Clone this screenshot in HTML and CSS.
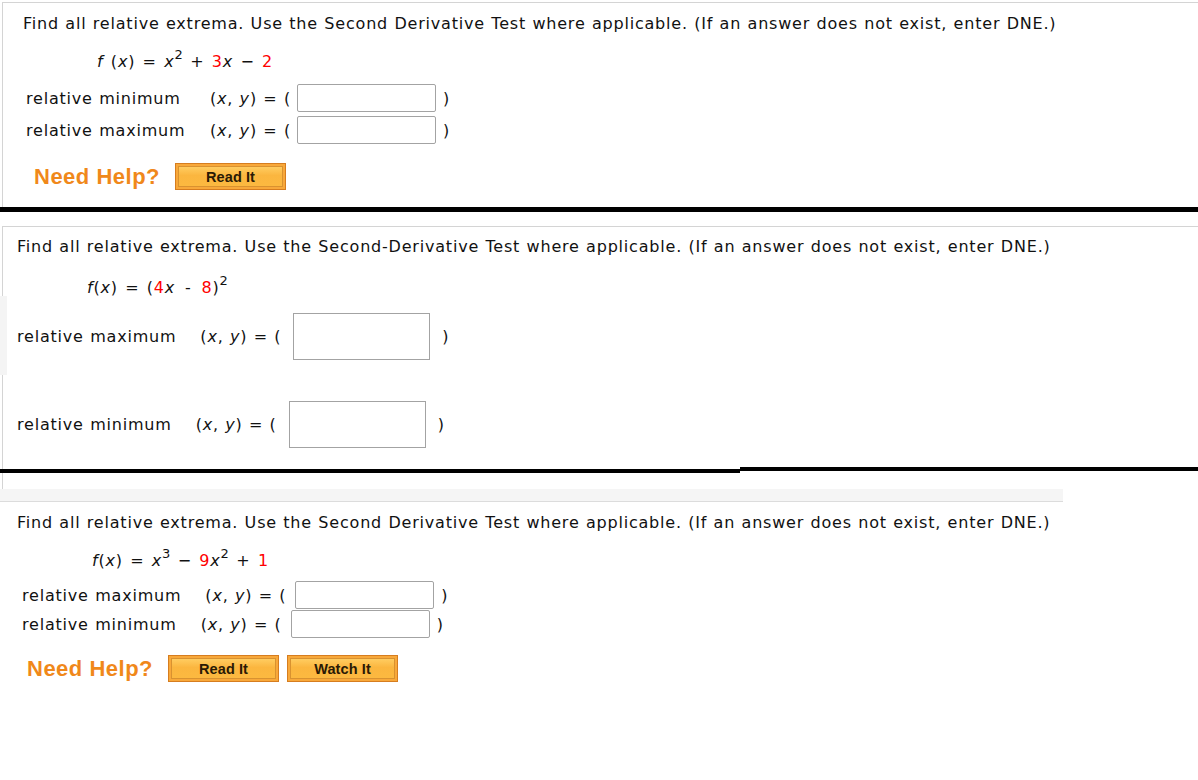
FILE: index.html
```html
<!DOCTYPE html>
<html>
<head>
<meta charset="utf-8">
<link rel="stylesheet" href="styles.css">
</head>
<body>
<div class="q q1">
  <p class="prompt">Find all relative extrema. Use the Second Derivative Test where applicable. (If an answer does not exist, enter DNE.)</p>
  <p class="formula f1"><i>f</i> (<i>x</i>) = <i>x</i><sup>2</sup> + <span class="red">3</span><i>x</i> − <span class="red">2</span></p>
  <div class="grid">
    <span>relative minimum</span><span class="xy">(<i>x</i>, <i>y</i>) = (</span><span class="box small"></span><span>)</span>
    <span>relative maximum</span><span class="xy">(<i>x</i>, <i>y</i>) = (</span><span class="box small"></span><span>)</span>
  </div>
  <div class="help h1">
    <span class="need">Need Help?</span>
    <span class="btn"><span class="btn-in">Read It</span></span>
  </div>
</div>
<div class="rule"></div>
<div class="q q2">
  <span class="tab"></span>
  <p class="prompt">Find all relative extrema. Use the Second-Derivative Test where applicable. (If an answer does not exist, enter DNE.)</p>
  <p class="formula f2"><i>f</i>(<i>x</i>) = (<span class="red">4</span><i>x</i><span class="sp"> - </span><span class="red">8</span>)<sup>2</sup></p>
  <div class="row r2a"><span class="lbl">relative maximum</span><span class="xy">(<i>x</i>, <i>y</i>) = (</span><span class="box big"></span><span class="cp">)</span></div>
  <div class="row r2b"><span class="lbl">relative minimum</span><span class="xy">(<i>x</i>, <i>y</i>) = (</span><span class="box big"></span><span class="cp">)</span></div>
  <div class="rule2"><span class="seg1"></span><span class="seg2"></span></div>
</div>
<div class="band"></div>
<div class="q3">
  <p class="prompt">Find all relative extrema. Use the Second Derivative Test where applicable. (If an answer does not exist, enter DNE.)</p>
  <p class="formula f3"><i>f</i>(<i>x</i>) = <i>x</i><sup>3</sup> − <span class="red">9</span><i>x</i><sup>2</sup> + <span class="red">1</span></p>
  <div class="row r3a"><span class="lbl">relative maximum</span><span class="xy">(<i>x</i>, <i>y</i>) = (</span><span class="box small"></span><span class="cp3">)</span></div>
  <div class="row r3b"><span class="lbl">relative minimum</span><span class="xy">(<i>x</i>, <i>y</i>) = (</span><span class="box small"></span><span class="cp3">)</span></div>
  <div class="help h3">
    <span class="need">Need Help?</span>
    <span class="btn"><span class="btn-in">Read It</span></span>
    <span class="btn"><span class="btn-in">Watch It</span></span>
  </div>
</div>
</body>
</html>
```
FILE: styles.css
```css
html, body {
  margin: 0;
  padding: 0;
  background: #fff;
}
body {
  font-family: "DejaVu Sans", Verdana, sans-serif;
  font-size: 16px;
  letter-spacing: 0.8px;
  word-spacing: 0.5px;
  color: #111;
  width: 1198px;
  overflow: hidden;
}
p { margin: 0; }
i { font-style: italic; }
.red { color: #f00; }
sup {
  font-size: 13px;
  line-height: 0;
  position: relative;
  top: -2px;
  vertical-align: super;
  letter-spacing: 0;
}
.prompt, .formula {
  line-height: 20px;
  white-space: nowrap;
}
.formula { word-spacing: 1.5px; }

.q {
  margin-left: 2px;
  border-left: 1px solid #d4d4d4;
  border-top: 1px solid #d4d4d4;
}
.q1 {
  margin-top: 2px;
  padding: 11px 0 17px 20px;
}
.f1 { margin-top: 18px; padding-left: 74px; }
.grid {
  margin-top: 12px;
  margin-left: 3px;
  display: grid;
  grid-template-columns: 184px auto auto auto;
  justify-content: start;
  align-items: center;
  row-gap: 4px;
}
.grid .xy { padding-right: 6px; }
.grid .box { margin-right: 7px; }
.box {
  display: inline-block;
  box-sizing: border-box;
  border: 1px solid #a3a3a3;
  background: #fff;
}
.box.small {
  width: 139px;
  height: 28px;
  border-radius: 2px;
}
.box.big {
  width: 137px;
  height: 47px;
}

.help {
  display: flex;
  align-items: center;
}
.h1 { margin-top: 19px; margin-left: 11px; }
.need {
  font-family: "Liberation Sans", Arial, sans-serif;
  font-weight: bold;
  font-size: 22px;
  color: #f0881a;
  margin-right: 15px;
  letter-spacing: 0.5px;
  word-spacing: 0;
}
.btn {
  display: inline-flex;
  box-sizing: border-box;
  width: 111px;
  height: 27px;
  border: 1px solid #d67d1f;
  background: #f8a83a;
  padding: 2px;
  margin-right: 8px;
}
.btn-in {
  flex: 1;
  display: flex;
  align-items: center;
  justify-content: center;
  border: 1px solid #d99230;
  background: linear-gradient(#ffcc60, #fbb63f 45%, #fcb940);
  font-family: "Liberation Sans", Arial, sans-serif;
  font-weight: bold;
  font-size: 14.5px;
  color: #2a1a05;
  letter-spacing: 0.1px;
  word-spacing: 0;
}

.rule {
  height: 5px;
  background: #000;
  margin-top: 0;
  margin-bottom: 14px;
}

.q2 {
  position: relative;
  padding: 10px 0 16px 14px;
}
.tab {
  position: absolute;
  left: -3px;
  top: 69px;
  width: 7px;
  height: 79px;
  background: #f4f4f4;
}
.f2 { margin-top: 21px; padding-left: 70px; }
.f2 .sp { word-spacing: 4px; }
.row {
  display: flex;
  align-items: center;
  white-space: nowrap;
}
.lbl { margin-right: 24px; }
.row .xy { margin-right: 6px; }
.r2a { margin-top: 15px; }
.r2a .xy, .r2b .xy { margin-right: 12px; }
.r2b { margin-top: 41px; }
.cp { margin-left: 12px; }
.rule2 {
  display: flex;
  align-items: flex-start;
  margin-left: -17px;
  margin-top: 19px;
  height: 6px;
}
.seg1 {
  width: 740px;
  height: 4px;
  margin-top: 2px;
  background: #000;
}
.seg2 {
  flex: 1;
  height: 4px;
  background: #000;
}

.band {
  width: 1063px;
  height: 12px;
  background: #f5f5f5;
  border-bottom: 1px solid #dcdcdc;
}
.q3 {
  padding: 11px 0 0 17px;
}
.f3 { margin-top: 18px; padding-left: 75px; }
.r3a { margin-top: 10px; padding-left: 5px; }
.r3b { margin-top: 1px; padding-left: 5px; }
.r3a .xy, .r3b .xy { margin-right: 9px; }
.cp3 { margin-left: 7px; }
.h3 { margin-top: 17px; margin-left: 10px; }
```
